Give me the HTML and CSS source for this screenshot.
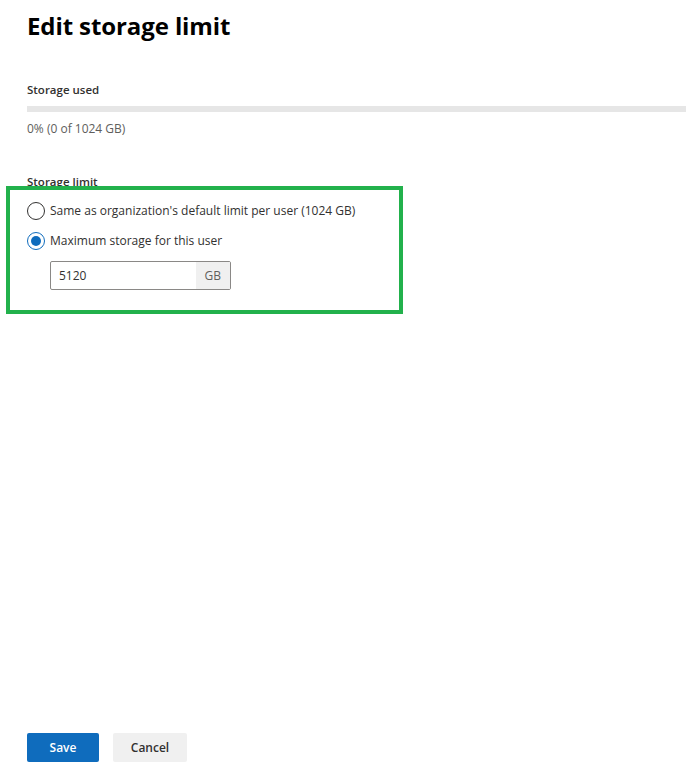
FILE: index.html
```html
<!DOCTYPE html>
<html lang="en">
  <head>
    <meta charset="UTF-8" />
    <meta name="viewport" content="width=device-width, initial-scale=1.0" />
    <title>Edit storage limit</title>
    <link rel="stylesheet" href="styles.css">
  </head>
  <body>
    <div class="panel">
      <h1>Edit storage limit</h1>

      <section class="usage">
        <h2>Storage used</h2>
        <div class="bar"><div class="bar-fill" style="width: 0%"></div></div>
        <p class="usage-text">0% (0 of 1024 GB)</p>
      </section>

      <section class="limit">
        <h2>Storage limit</h2>
        <label class="option">
          <span class="radio"></span>
          Same as organization's default limit per user (1024 GB)
        </label>
        <label class="option">
          <span class="radio checked"></span>
          Maximum storage for this user
        </label>
        <div class="field">
          <span class="field-value">5120</span>
          <span class="field-suffix">GB</span>
        </div>
        <div class="highlight"></div>
      </section>

      <footer class="actions">
        <button class="btn primary">Save</button>
        <button class="btn">Cancel</button>
      </footer>
    </div>
  </body>
</html>
```

FILE: styles.css
```css
* {
  margin: 0;
  padding: 0;
  box-sizing: border-box;
}

body {
  background-color: #fff;
  font-family: "Open Sans", "Noto Sans", sans-serif;
  color: #323130;
  overflow: hidden;
}

.panel {
  display: flex;
  flex-direction: column;
  height: 768px;
  padding: 10px 0 6px 27px;
}

h1 {
  font-size: 24px;
  font-weight: 700;
  color: #000;
  letter-spacing: -0.1px;
  line-height: 32px;
}

h2 {
  font-size: 11.5px;
  font-weight: 600;
  color: #323130;
  line-height: 16px;
}

.usage {
  margin-top: 40px;
}

.bar {
  height: 6px;
  background-color: #e6e6e6;
  margin-top: 8px;
}

.bar-fill {
  height: 100%;
  background-color: #0f6cbd;
}

.usage-text {
  font-size: 12px;
  color: #605e5c;
  margin-top: 9px;
  line-height: 16px;
}

.limit {
  position: relative;
  margin-top: 37px;
}

.option {
  display: flex;
  align-items: center;
  gap: 5px;
  font-size: 12px;
  line-height: 16px;
  margin-top: 12px;
}

.option + .option {
  margin-top: 12px;
}

.radio {
  width: 18px;
  height: 18px;
  border: 1px solid #323130;
  border-radius: 50%;
  display: flex;
  align-items: center;
  justify-content: center;
}

.radio.checked {
  border-color: #0f6cbd;
}

.radio.checked::after {
  content: "";
  width: 10px;
  height: 10px;
  border-radius: 50%;
  background-color: #0f6cbd;
}

.field {
  display: flex;
  width: 181px;
  height: 29px;
  margin: 11px 0 0 23px;
  border: 1px solid #8a8886;
  border-radius: 2px;
  font-size: 12px;
}

.field-value {
  flex: 1;
  display: flex;
  align-items: center;
  padding-left: 8px;
}

.field-suffix {
  display: flex;
  align-items: center;
  padding: 0 9px;
  background-color: #f0f0f0;
  color: #605e5c;
}

.highlight {
  position: absolute;
  left: -21px;
  top: 12px;
  width: 397px;
  height: 128px;
  border: 4px solid #22b14c;
}

.actions {
  margin-top: auto;
  display: flex;
  gap: 14px;
}

.btn {
  font-family: inherit;
  font-size: 12px;
  font-weight: 600;
  height: 29px;
  min-width: 72px;
  padding: 0 16px;
  border: none;
  border-radius: 2px;
  background-color: #f0f0f0;
  color: #323130;
}

.btn.primary {
  background-color: #0f6cbd;
  color: #fff;
}

.btn + .btn {
  min-width: 74px;
}
```
